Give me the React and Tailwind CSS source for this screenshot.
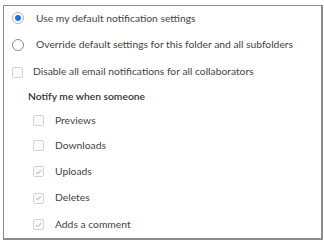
import React from 'react';

const Radio = ({ checked }) => (
  <span
    className={`flex h-[12px] w-[12px] shrink-0 items-center justify-center rounded-full border bg-white ${
      checked ? 'border-[#b5b5b5]' : 'border-[#8a8a8a]'
    }`}
  >
    {checked && <span className="h-[6px] w-[6px] rounded-full bg-[#1b74e4]"></span>}
  </span>
);

const Checkbox = ({ checked }) => (
  <span className="flex h-[11px] w-[11px] shrink-0 items-center justify-center rounded-[2px] border border-[#d3d3d3] bg-[#fbfbfb]">
    {checked && (
      <svg width="7" height="6" viewBox="0 0 7 6" fill="none">
        <path d="M1 3.2 L2.7 4.8 L6 1.2" stroke="#a9a9a9" strokeWidth="1" />
      </svg>
    )}
  </span>
);

const events = [
  { label: 'Previews', checked: false, h: 'h-[26px]' },
  { label: 'Downloads', checked: false, h: 'h-[25px]' },
  { label: 'Uploads', checked: true, h: 'h-[27px]' },
  { label: 'Deletes', checked: true, h: 'h-[26px]' },
  { label: 'Adds a comment', checked: true, h: 'h-[27px]' },
];

const App = () => {
  return (
    <div className="h-[240px] w-[324px] bg-white pl-[3px] pt-[5px] font-['Lato',sans-serif] text-[10.3px] text-[#444444]">
      <div className="flex h-[235px] w-[320px] flex-col border-t border-l border-r-2 border-b-2 border-[#8c8c8c]">
        {/* Notification mode */}
        <div className="flex h-[25px] items-center pl-[8px]">
          <Radio checked />
          <span className="ml-[12px]">Use my default notification settings</span>
        </div>
        <div className="flex h-[28px] items-center pl-[8px]">
          <Radio />
          <span className="ml-[12px]">Override default settings for this folder and all subfolders</span>
        </div>
        <div className="flex h-[27px] items-center pl-[8px]">
          <Checkbox />
          <span className="ml-[10px]">Disable all email notifications for all collaborators</span>
        </div>

        {/* Events */}
        <div className="flex h-[22px] items-center pl-[24px] font-semibold text-[#333333]">
          Notify me when someone
        </div>
        {events.map((item, index) => (
          <div key={index} className={`flex items-center pl-[29px] ${item.h}`}>
            <Checkbox checked={item.checked} />
            <span className="ml-[11px]">{item.label}</span>
          </div>
        ))}
      </div>
    </div>
  );
};

export default App;
